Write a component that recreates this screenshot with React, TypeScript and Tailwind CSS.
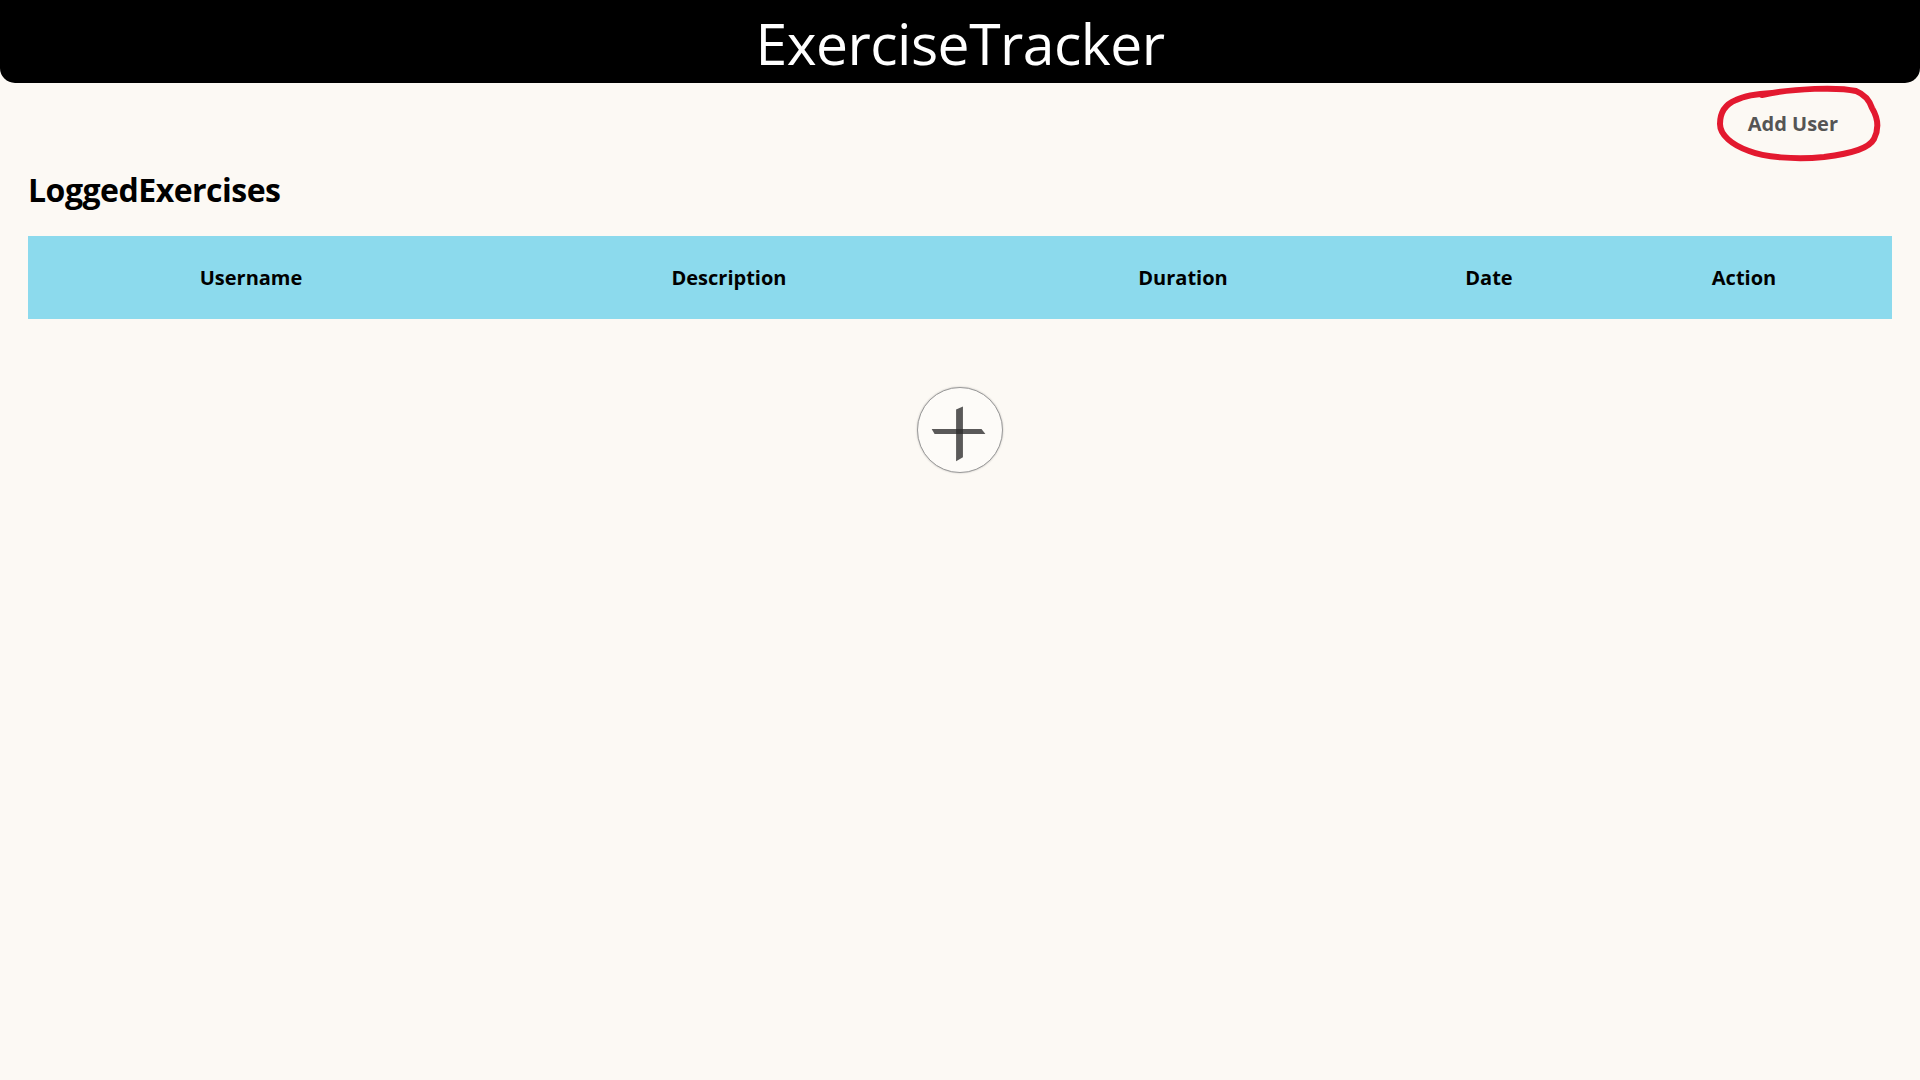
import React from "react";

const columns = [
  { label: "Username", width: "w-[446px]" },
  { label: "Description", width: "w-[510px]" },
  { label: "Duration", width: "w-[398px]" },
  { label: "Date", width: "w-[214px]" },
  { label: "Action", width: "flex-1" },
];

function Scribble() {
  return (
    <svg
      className="absolute left-[-34px] top-[-27px] pointer-events-none"
      width="170"
      height="82"
      viewBox="0 0 170 82"
      fill="none"
    >
      <path
        d="M48 10 C80 3 125 2 142 6 C152 10 156 17 158 23 C164 33 165 44 160 54 C155 63 140 68 110 72 C80 75 50 72 35 66 C18 60 6 50 6 39 C6 27 12 19 22 15 C30 11 40 9 58 8"
        stroke="#e3192f"
        strokeWidth="6"
        strokeLinecap="round"
        strokeLinejoin="round"
      />
    </svg>
  );
}

function PlusGlyph() {
  return (
    <svg width="86" height="86" viewBox="0 0 86 86">
      <polygon points="14,42 65,42 69,47 17,47" fill="#2b2b2b" fillOpacity="0.78" />
      <polygon points="39,22 46,19 46,71 39,75" fill="#2b2b2b" fillOpacity="0.78" />
    </svg>
  );
}

export default function App() {
  return (
    <div className="min-h-screen bg-[#fcf9f4] font-['Open_Sans','Noto_Sans',sans-serif]">
      <header className="h-[83px] bg-black rounded-b-[15px] flex items-center justify-center">
        <h1 className="text-white text-[57px] leading-none tracking-[-0.5px] pt-1">ExerciseTracker</h1>
      </header>

      <div className="flex justify-end pr-[82px] pt-[29px]">
        <button className="relative text-[20px] font-bold text-[#555555] leading-6">
          Add User
          <Scribble />
        </button>
      </div>

      <main className="px-[28px]">
        <h2 className="text-[32px] font-bold text-black leading-none mt-[38px] tracking-[-0.5px]">LoggedExercises</h2>

        <div className="mt-[30px] h-[83px] bg-[#8cdaed] flex items-center">
          {columns.map((c) => (
            <div key={c.label} className={`${c.width} text-center text-[20px] font-bold text-black`}>
              {c.label}
            </div>
          ))}
        </div>

        <div className="flex justify-center mt-[68px]">
          <button className="w-[86px] h-[86px] rounded-full border border-[#9a9a9a] bg-[#fdfbf8] shadow-[0_0_2px_rgba(0,0,0,0.25)] flex items-center justify-center">
            <PlusGlyph />
          </button>
        </div>
      </main>
    </div>
  );
}
